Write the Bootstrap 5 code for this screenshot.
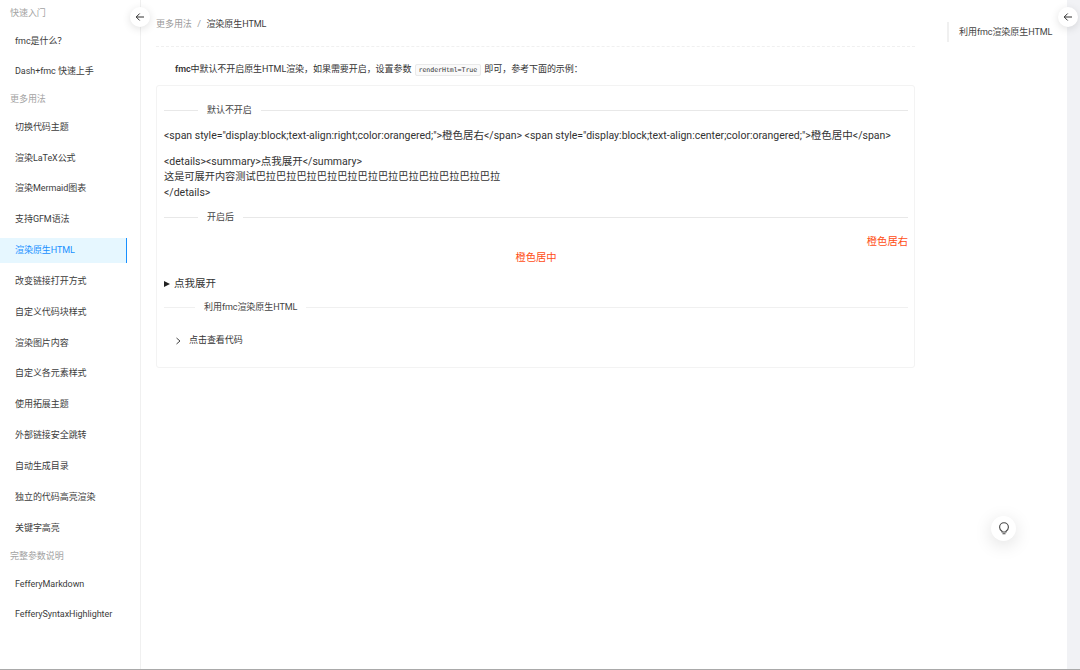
<!DOCTYPE html>
<html lang="zh">
<head>
<meta charset="utf-8">
<title>渲染原生HTML</title>
<link href="https://cdn.jsdelivr.net/npm/bootstrap@5.3.0/dist/css/bootstrap.min.css" rel="stylesheet">
<style>
html,body{height:670px;overflow:hidden}
body{font-family:Roboto,"Noto Sans CJK SC",sans-serif;color:#333;background:#fff;font-size:9px;line-height:1.5;letter-spacing:-.06px}
.shell{height:669px;width:1080px}
.bottom-rule{height:1px;background:#a9a9a9}
.side{width:141px;border-right:1px solid #f0f0f0;flex:none}
.side-label{height:22px;line-height:22px;padding-left:10px;color:#a3a3a3;font-size:9px}
.side-item{height:25px;line-height:25px;margin-bottom:5.85px;padding-left:15px;color:#3c3c3c;font-size:9px;white-space:nowrap;width:127px}
.side-item.on{background:#e6f7ff;color:#1890ff;box-shadow:inset -1px 0 0 #1890ff}
.gap-a{height:4.5px}
.gap-b{height:4.5px}
.gap-c{height:5px}
.main-col{width:759px;margin-left:15px;flex:none}
.crumb{height:47px;padding-top:16px;line-height:16px;border-bottom:1px dashed #f0f0f0;color:#9a9a9a}
.crumb b{font-weight:400;color:#3c3c3c}
.crumb i{font-style:normal;margin:0 5.5px}
.intro{height:38px;padding:14px 0 0 19px;line-height:17px;color:#333}
.intro strong{font-weight:600}
.intro code{font-family:"DejaVu Sans Mono",monospace;font-size:6.6px;color:#333;background:#fafafa;border:1px solid #eaeaea;border-radius:2px;padding:1px 3px;margin:0 1px}
.demo{height:283px;border:1px solid #f3f3f3;border-radius:3px;padding:0 6px 0 7px}
.rule-row{display:flex;align-items:center;height:16px;color:#444}
.rule-row::before{content:"";width:34px;height:1px;background:#e8e8e8}
.rule-row::after{content:"";flex:1;height:1px;background:#e8e8e8}
.rule-row span{padding:1.5px 9px 0}
.rule-row.soft::before{width:31px;background:#f0f0f0}
.rule-row.soft::after{background:#f0f0f0}
.raw{font-size:10.5px;line-height:15.5px;color:#333;white-space:nowrap;letter-spacing:0}
.raw-cjk{font-size:10.2px}
.tint{color:#ff4d14;font-size:10.3px;line-height:15.5px;letter-spacing:0}
.tri{display:inline-block;width:0;height:0;border-left:6px solid #222;border-top:3.5px solid transparent;border-bottom:3.5px solid transparent;margin-right:4px}
.toc{width:112px;margin-left:32px;padding-top:22px;flex:none}
.toc-link{border-left:2px solid #f0f0f0;height:20px;line-height:20px;padding-left:10px;color:#444;white-space:nowrap}
.gutter{width:13px;background:#f1f2f5;flex:none;margin-left:8px}
.round-btn{position:absolute;width:20px;height:20px;border-radius:50%;background:#fff;box-shadow:0 2px 8px rgba(0,0,0,.12);display:flex;align-items:center;justify-content:center}
.btn-left{left:130px;top:7px}
.btn-right{left:1058px;top:7px}
.btn-bulb{left:991px;top:516px;width:25px;height:25px;box-shadow:0 4px 18px rgba(0,0,0,.13)}
.stage{position:relative}
.first-label{margin-top:2px}
.next-label{margin-top:-2px}
.raw-a{margin-top:10px}
.raw-b{margin-top:10px}
.on-rule{margin-top:9px}
.tint-first{margin-top:9px}
.raw-c{margin-top:10.5px}
.soft-top{margin-top:8px}
.code-toggle{margin:18px 0 0 11px;height:16px}
.code-toggle span{margin-left:7px}
</style>
</head>
<body>
<div class="stage shell d-flex">
  <nav class="side">
    <div class="side-label first-label">快速入门</div>
    <div class="gap-a"></div>
    <div class="side-item">fmc是什么？</div>
    <div class="side-item">Dash+fmc 快速上手</div>
    <div class="side-label next-label">更多用法</div>
    <div class="gap-b"></div>
    <div class="side-item">切换代码主题</div>
    <div class="side-item">渲染LaTeX公式</div>
    <div class="side-item">渲染Mermaid图表</div>
    <div class="side-item">支持GFM语法</div>
    <div class="side-item on">渲染原生HTML</div>
    <div class="side-item">改变链接打开方式</div>
    <div class="side-item">自定义代码块样式</div>
    <div class="side-item">渲染图片内容</div>
    <div class="side-item">自定义各元素样式</div>
    <div class="side-item">使用拓展主题</div>
    <div class="side-item">外部链接安全跳转</div>
    <div class="side-item">自动生成目录</div>
    <div class="side-item">独立的代码高亮渲染</div>
    <div class="side-item">关键字高亮</div>
    <div class="side-label next-label">完整参数说明</div>
    <div class="gap-c"></div>
    <div class="side-item">FefferyMarkdown</div>
    <div class="side-item">FefferySyntaxHighlighter</div>
  </nav>
  <main class="main-col">
    <div class="crumb">更多用法<i>/</i><b>渲染原生HTML</b></div>
    <p class="intro mb-0"><strong>fmc</strong>中默认不开启原生HTML渲染，如果需要开启，设置参数 <code>renderHtml=True</code> 即可，参考下面的示例：</p>
    <section class="demo">
      <div class="rule-row mt-3"><span>默认不开启</span></div>
      <p class="raw mb-0 raw-a">&lt;span style="display:block;text-align:right;color:orangered;"&gt;橙色居右&lt;/span&gt; &lt;span style="display:block;text-align:center;color:orangered;"&gt;橙色居中&lt;/span&gt;</p>
      <p class="raw mb-0 raw-b">&lt;details&gt;&lt;summary&gt;点我展开&lt;/summary&gt;<br><span class="raw-cjk">这是可展开内容测试巴拉巴拉巴拉巴拉巴拉巴拉巴拉巴拉巴拉巴拉巴拉巴拉</span><br>&lt;/details&gt;</p>
      <div class="rule-row on-rule"><span>开启后</span></div>
      <div class="tint text-end tint-first">橙色居右</div>
      <div class="tint text-center">橙色居中</div>
      <div class="raw raw-c"><span class="tri"></span>点我展开</div>
      <div class="rule-row soft soft-top"><span>利用fmc渲染原生HTML</span></div>
      <div class="d-flex align-items-center code-toggle">
        <svg width="7" height="8" viewBox="0 0 7 8" fill="none" stroke="#444" stroke-width="1"><path d="M1.500 1l3.500 3-3.500 3"/></svg>
        <span>点击查看代码</span>
      </div>
    </section>
  </main>
  <aside class="toc"><div class="toc-link">利用fmc渲染原生HTML</div></aside>
  <div class="gutter"></div>
  <div class="round-btn btn-left"><svg width="10" height="10" viewBox="0 0 10 10" fill="none" stroke="#333" stroke-width="1"><path d="M9 5H1.200M4.700 1.500L1.200 5l3.500 3.500"/></svg></div>
  <div class="round-btn btn-right"><svg width="10" height="10" viewBox="0 0 10 10" fill="none" stroke="#333" stroke-width="1"><path d="M9 5H1.200M4.700 1.500L1.200 5l3.500 3.500"/></svg></div>
  <div class="round-btn btn-bulb"><svg width="12" height="13" viewBox="0 0 12 13" fill="none" stroke="#444" stroke-width="1.100"><path d="M4 9.300C2.700 8.400 1.600 7 1.600 5.200a4.400 4.400 0 0 1 8.800 0c0 1.800-1.100 3.200-2.400 4.100V10H4zM4.500 11.800h3"/></svg></div>
</div>
<div class="bottom-rule"></div>
<script src="https://cdn.jsdelivr.net/npm/bootstrap@5.3.0/dist/js/bootstrap.bundle.min.js"></script>
</body>
</html>
